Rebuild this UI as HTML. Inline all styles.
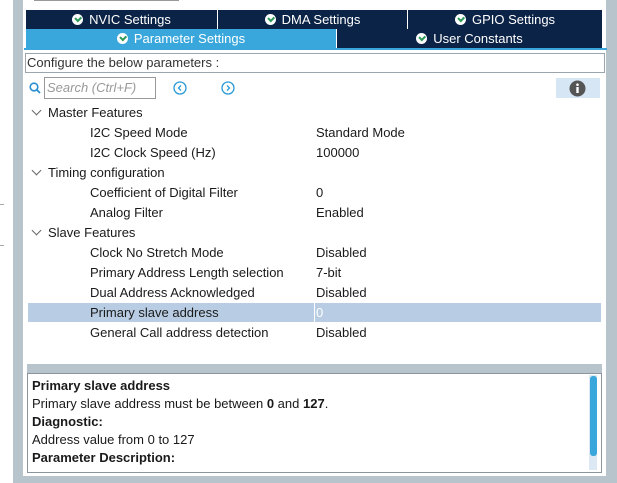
<!DOCTYPE html>
<html><head><style>
*{margin:0;padding:0;box-sizing:border-box}
body{width:617px;height:483px;position:relative;overflow:hidden;background:#fff;font-family:"Liberation Sans",Arial,sans-serif;font-size:13px;color:#1a1a1a}
.a{position:absolute}
.tab{position:absolute;height:19px;background:#0b2346;color:#fff;font-size:13px;text-align:center;line-height:19px}
.chk{display:inline-block;width:11px;height:11px;border-radius:50%;background:#fff;vertical-align:-1px;margin-right:6px;position:relative}
.chk:after{content:"";position:absolute;left:3px;top:2px;width:4px;height:2.5px;border-left:2px solid #2e9a5a;border-bottom:2px solid #2e9a5a;transform:rotate(-45deg)}
.row{position:absolute;left:28px;width:573px;height:20px;line-height:21px}
.g{padding-left:20px}
.c{position:absolute;left:62px}
.v{position:absolute;left:288px}
.chev{position:absolute;left:5px;top:5px;width:7px;height:7px;border-right:1px solid #666;border-bottom:1px solid #666;transform:rotate(45deg)}
</style></head><body>
<div class="a" style="left:13px;top:0;width:10px;height:483px;background:#b8c4cc"></div>
<div class="a" style="left:606px;top:0;width:11px;height:483px;background:#b8c4cc"></div>
<div class="a" style="left:23px;top:476px;width:594px;height:7px;background:#b8c4cc"></div>
<div class="a" style="left:34px;top:0;width:145px;height:1px;background:#999"></div>
<div class="a" style="left:0;top:204px;width:4px;height:1px;background:#aaa"></div>
<div class="a" style="left:0;top:245px;width:4px;height:1px;background:#aaa"></div>

<div class="tab" style="left:26px;top:10px;width:191px"><span class="chk"></span>NVIC Settings</div>
<div class="tab" style="left:218px;top:10px;width:189px"><span class="chk"></span>DMA Settings</div>
<div class="tab" style="left:408px;top:10px;width:194px"><span class="chk"></span>GPIO Settings</div>
<div class="tab" style="left:26px;top:29px;width:310px;background:#39a7db"><span class="chk"></span>Parameter Settings</div>
<div class="tab" style="left:337px;top:29px;width:265px"><span class="chk"></span>User Constants</div>
<div class="a" style="left:24px;top:48px;width:583px;height:2px;background:#39a7db"></div>

<div class="a" style="left:25px;top:53px;width:580px;height:20px;border:1px solid #9aa5ad;line-height:18px;padding-left:1px;color:#333">Configure the below parameters :</div>

<svg class="a" style="left:29px;top:82px" width="12" height="12"><circle cx="5" cy="5" r="3.8" fill="none" stroke="#2a8fd0" stroke-width="1.6"/><line x1="8" y1="8" x2="11" y2="11" stroke="#2a8fd0" stroke-width="1.8"/></svg>
<div class="a" style="left:44px;top:77px;width:112px;height:22px;border:1px solid #999;color:#999;font-style:italic;line-height:20px;padding-left:2px">Search (Ctrl+F)</div>
<svg class="a" style="left:173px;top:81px" width="14" height="14"><circle cx="7" cy="7" r="6" fill="none" stroke="#2a9ad8" stroke-width="1.3"/><path d="M8 4.5L5.5 7L8 9.5" fill="none" stroke="#2a9ad8" stroke-width="1.3"/></svg>
<svg class="a" style="left:221px;top:81px" width="14" height="14"><circle cx="7" cy="7" r="6" fill="none" stroke="#2a9ad8" stroke-width="1.3"/><path d="M6 4.5L8.5 7L6 9.5" fill="none" stroke="#2a9ad8" stroke-width="1.3"/></svg>
<div class="a" style="left:556px;top:78px;width:44px;height:20px;background:#d6e6f4"></div>
<svg class="a" style="left:569px;top:80px" width="17" height="17"><circle cx="8.5" cy="8.5" r="8" fill="#555"/><rect x="7.3" y="7" width="2.4" height="6" fill="#fff"/><circle cx="8.5" cy="4.7" r="1.3" fill="#fff"/></svg>

<div class="row g" style="top:102px"><span class="chev"></span>Master Features</div>
<div class="row" style="top:122px"><span class="c">I2C Speed Mode</span><span class="v">Standard Mode</span></div>
<div class="row" style="top:142px"><span class="c">I2C Clock Speed (Hz)</span><span class="v">100000</span></div>
<div class="row g" style="top:162px"><span class="chev"></span>Timing configuration</div>
<div class="row" style="top:182px"><span class="c">Coefficient of Digital Filter</span><span class="v">0</span></div>
<div class="row" style="top:202px"><span class="c">Analog Filter</span><span class="v">Enabled</span></div>
<div class="row g" style="top:222px"><span class="chev"></span>Slave Features</div>
<div class="row" style="top:242px"><span class="c">Clock No Stretch Mode</span><span class="v">Disabled</span></div>
<div class="row" style="top:262px"><span class="c">Primary Address Length selection</span><span class="v">7-bit</span></div>
<div class="row" style="top:282px"><span class="c">Dual Address Acknowledged</span><span class="v">Disabled</span></div>
<div class="row" style="top:303px;height:19px;line-height:19px;background:#b8cde3"><span class="c">Primary slave address</span><span class="a" style="left:286px;top:0;width:1px;height:19px;background:#fff"></span><span class="v" style="color:#fff">0</span></div>
<div class="row" style="top:322px"><span class="c">General Call address detection</span><span class="v">Disabled</span></div>

<div class="a" style="left:27px;top:364px;width:575px;height:10px;background:#b8c4cc"></div>
<div class="a" style="left:27px;top:373px;width:575px;height:100px;border:1px solid #8a959d;line-height:18px;padding:3px 0 0 4px">
<b>Primary slave address</b><br>Primary slave address must be between <b>0</b> and <b>127</b>.<br><b>Diagnostic:</b><br>Address value from 0 to 127<br><b>Parameter Description:</b>
</div>
<div class="a" style="left:589px;top:375px;width:8px;height:95px;background:#dce8f3"></div>
<div class="a" style="left:590px;top:376px;width:7px;height:80px;background:#39a7db;border-radius:3px"></div>
</body></html>
